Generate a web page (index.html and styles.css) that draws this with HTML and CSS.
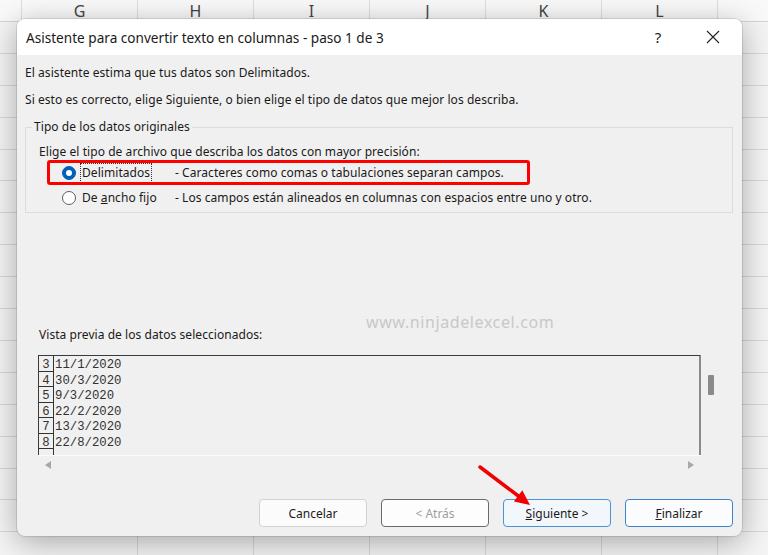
FILE: index.html
```html
<!DOCTYPE html>
<html lang="es">
<head>
<meta charset="utf-8">
<title>Asistente para convertir texto en columnas</title>
<link rel="stylesheet" href="styles.css">
</head>
<body>
<div class="sheet">
  <div class="colhead">
    <div class="col first"></div>
    <div class="col">G</div>
    <div class="col">H</div>
    <div class="col">I</div>
    <div class="col">J</div>
    <div class="col">K</div>
    <div class="col">L</div>
    <div class="col rest"></div>
  </div>
  <div class="grid"></div>
</div>

<div class="dialog">
  <div class="titlebar">
    <span class="title">Asistente para convertir texto en columnas - paso 1 de 3</span>
    <span class="help">?</span>
    <span class="close"><svg width="14" height="14" viewBox="0 0 14 14"><path d="M1 1 L13 13 M13 1 L1 13" stroke="#222" stroke-width="1.1" fill="none"/></svg></span>
  </div>
  <div class="body">
    <p class="line">El asistente estima que tus datos son Delimitados.</p>
    <p class="line l2">Si esto es correcto, elige Siguiente, o bien elige el tipo de datos que mejor los describa.</p>
    <fieldset class="group">
      <legend>Tipo de los datos originales</legend>
      <p class="prompt">Elige el tipo de archivo que describa los datos con mayor precisión:</p>
      <div class="opt">
        <span class="radio on"></span>
        <span class="lbl-wrap"><span class="lbl focus">Delimitados</span></span>
        <span class="desc">- Caracteres como comas o tabulaciones separan campos.</span>
      </div>
      <div class="opt">
        <span class="radio"></span>
        <span class="lbl-wrap"><span class="lbl">De <u>a</u>ncho fijo</span></span>
        <span class="desc">- Los campos están alineados en columnas con espacios entre uno y otro.</span>
      </div>
    </fieldset>
    <p class="line pv-label">Vista previa de los datos seleccionados:</p>
    <div class="preview">
      <div class="pv-top">
        <div class="pv-list">
          <div class="row"><span class="num">3</span><span class="val">11/1/2020</span></div>
          <div class="row"><span class="num">4</span><span class="val">30/3/2020</span></div>
          <div class="row"><span class="num">5</span><span class="val">9/3/2020</span></div>
          <div class="row"><span class="num">6</span><span class="val">22/2/2020</span></div>
          <div class="row"><span class="num">7</span><span class="val">13/3/2020</span></div>
          <div class="row"><span class="num">8</span><span class="val">22/8/2020</span></div>
          <div class="row"><span class="num"></span><span class="val"></span></div>
        </div>
        <div class="vscroll"><div class="thumb"></div></div>
      </div>
      <div class="hscroll"><span class="arr left"></span><span class="arr right"></span></div>
    </div>
    <div class="buttons">
      <button class="btn cancel">Cancelar</button>
      <button class="btn back">&lt; Atrás</button>
      <button class="btn next"><u>S</u>iguiente &gt;</button>
      <button class="btn finish"><u>F</u>inalizar</button>
    </div>
  </div>
  <div class="highlight"></div>
  <div class="watermark">www.ninjadelexcel.com</div>
</div>

<svg class="arrow" width="70" height="56" viewBox="0 0 70 56">
  <line x1="10" y1="9" x2="49" y2="38.5" stroke="#f00000" stroke-width="3.5" stroke-linecap="round"/>
  <polygon points="60,47 43.9,43.5 52.3,32.3" fill="#f00000"/>
</svg>
</body>
</html>
```
FILE: styles.css
```css
html, body {
  margin: 0;
  padding: 0;
}
body {
  width: 768px;
  height: 555px;
  overflow: hidden;
  position: relative;
  font-family: "Noto Sans", "Open Sans", sans-serif;
  background: #fff;
}

/* spreadsheet background */
.sheet {
  height: 555px;
  display: flex;
  flex-direction: column;
  background: #f4f4f4;
}
.colhead {
  display: flex;
  height: 22px;
  box-sizing: border-box;
  border-bottom: 1px solid #d4d4d4;
  background: #f9f9f9;
}
.col {
  width: 116px;
  flex: none;
  box-sizing: border-box;
  border-right: 1px solid #dedede;
  text-align: center;
  font-size: 16px;
  line-height: 22px;
  color: #444;
}
.col.first { width: 22px; }
.col.rest { flex: 1; border-right: none; }
.grid {
  flex: 1;
  background-color: #f4f4f4;
  background-image:
    repeating-linear-gradient(to bottom, transparent 0 30.9px, #d8d8d8 30.9px 31.9px),
    repeating-linear-gradient(to right, transparent 0 115px, #d8d8d8 115px 116px);
  background-position: 0 0, 22px 0;
}

/* dialog */
.dialog {
  position: absolute;
  left: 17px;
  top: 19px;
  width: 725px;
  height: 517px;
  border-radius: 8px;
  background: #f0f0f0;
  box-shadow: 0 0 0 1px rgba(0, 0, 0, 0.10), 0 6px 30px rgba(0, 0, 0, 0.32);
  display: flex;
  flex-direction: column;
  color: #1a1a1a;
}
.titlebar {
  height: 36px;
  flex: none;
  background: #fff;
  border-radius: 8px 8px 0 0;
  display: flex;
  align-items: center;
  padding: 0 6px 0 9px;
}
.title {
  flex: 1;
  font-size: 13.6px;
  color: #1a1a1a;
}
.help {
  width: 20px;
  text-align: center;
  font-size: 15px;
  margin-right: 22px;
}
.close {
  width: 46px;
  display: flex;
  justify-content: center;
  align-items: center;
}

.body {
  flex: 1;
  display: flex;
  flex-direction: column;
  padding: 10px 9px 9px 8px;
  letter-spacing: 0.06px;
}
.line {
  margin: 0;
  font-size: 12px;
  line-height: 16px;
}
.l2 { margin-top: 11px; }

.group {
  margin: 11px 0 0 0;
  padding: 0 0 2px 0;
  border: 1px solid #dcdcdc;
  min-width: 0;
}
.group legend {
  margin-left: 6px;
  padding: 0 2px;
  font-size: 12px;
  line-height: 16px;
}
.prompt {
  margin: 9px 0 0 0;
  padding-left: 13px;
  font-size: 12px;
  line-height: 16px;
}
.opt {
  display: flex;
  align-items: center;
  height: 25px;
  padding-left: 36px;
  font-size: 12px;
  line-height: 16px;
}
.radio {
  width: 14px;
  height: 14px;
  flex: none;
  box-sizing: border-box;
  border-radius: 50%;
  border: 1px solid #5e5e5e;
  background: #fff;
  margin-right: 4px;
  display: flex;
  align-items: center;
  justify-content: center;
}
.radio.on {
  background: #005fb8;
  border-color: #005fb8;
}
.radio.on::after {
  content: "";
  width: 6px;
  height: 6px;
  border-radius: 50%;
  background: #fff;
}
.lbl-wrap {
  width: 95px;
  flex: none;
}
.lbl {
  display: inline-block;
  border: 1px dotted transparent;
  padding: 1px 1px;
}
.lbl.focus { border-color: #333; }

.pv-label {
  margin-top: 114px;
  padding-left: 14px;
}

.preview {
  margin: 12px 0 0 13px;
  width: 681px;
  letter-spacing: 0;
}
.pv-top { display: flex; }
.pv-list {
  width: 663px;
  height: 100px;
  box-sizing: border-box;
  border-top: 1px solid #3a3a3a;
  border-left: 1px solid #3a3a3a;
  border-right: 2px solid #8a8a8a;
  overflow: hidden;
  font-family: "Liberation Mono", "Courier New", monospace;
  font-size: 12.3px;
  color: #333;
}
.row {
  display: flex;
  height: 15.5px;
  align-items: stretch;
}
.num {
  width: 15px;
  flex: none;
  box-sizing: border-box;
  border-right: 1px solid #333;
  border-bottom: 1px solid #333;
  text-align: center;
  line-height: 11px;
  padding-top: 4px;
}
.val {
  line-height: 11px;
  padding-top: 4px;
  padding-left: 1px;
}
.vscroll {
  width: 18px;
  flex: none;
}
.thumb {
  margin: 20px 0 0 7px;
  width: 6px;
  height: 20px;
  background: #8a8a8a;
  border-radius: 1px;
}
.hscroll {
  width: 663px;
  height: 18px;
  box-sizing: border-box;
  border-top: 1px solid #fbfbfb;
  display: flex;
  justify-content: space-between;
  align-items: center;
  padding: 0 7px;
}
.arr {
  width: 0;
  height: 0;
  border-top: 4px solid transparent;
  border-bottom: 4px solid transparent;
}
.arr.left { border-right: 6px solid #a8a8a8; }
.arr.right { border-left: 6px solid #a8a8a8; }

.buttons {
  margin-top: auto;
  display: flex;
  justify-content: flex-end;
  gap: 14px;
  letter-spacing: 0;
}
.btn {
  width: 108px;
  height: 28px;
  box-sizing: border-box;
  border-radius: 4px;
  border: 1px solid #d2d2d2;
  background: #fbfbfb;
  font-family: "Noto Sans", sans-serif;
  font-size: 12px;
  color: #1a1a1a;
  padding: 0;
}
.btn.back {
  border-color: #6b6b6b;
  background: #fdfdfd;
  color: #9d9d9d;
}
.btn.next {
  border-color: #4a92dc;
  background: #f2f7fc;
}
.btn.finish {
  border-color: #3b84d0;
  background: #fbfcfd;
}

.highlight {
  position: absolute;
  left: 30px;
  top: 141px;
  width: 483px;
  height: 25px;
  box-sizing: border-box;
  border: 3px solid #ff0000;
  border-radius: 3px;
}
.watermark {
  position: absolute;
  left: 349px;
  top: 292px;
  font-size: 16px;
  line-height: 22px;
  color: #c8c8c8;
  letter-spacing: 0.6px;
}
.arrow {
  position: absolute;
  left: 470px;
  top: 458px;
}
```
